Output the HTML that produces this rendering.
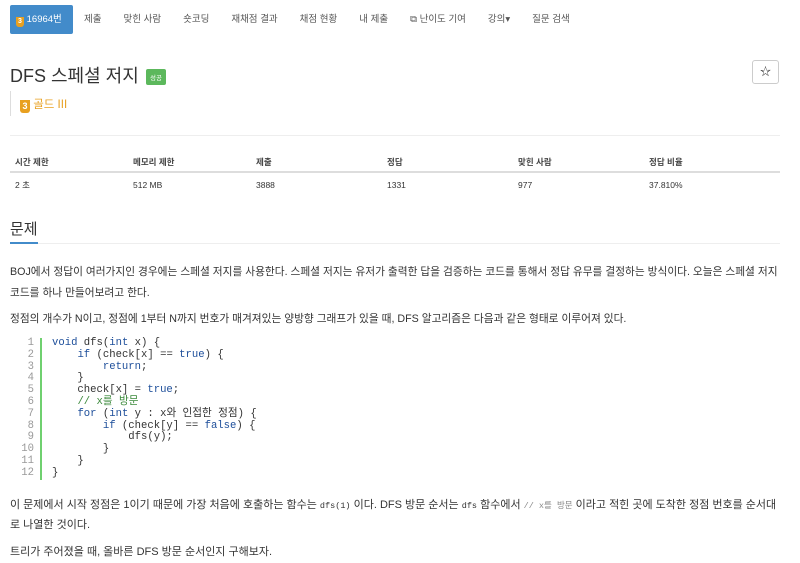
<!DOCTYPE html>
<html><head><meta charset="utf-8"><style>
*{margin:0;padding:0;box-sizing:border-box}
body{width:800px;height:563px;background:#fff;font-family:"Liberation Sans","Noto Sans CJK KR",sans-serif;color:#333;position:relative;overflow:hidden;font-size:11px}
.a{position:absolute;white-space:nowrap}
.nav{position:absolute;top:5px;left:10px;height:29px;display:flex;white-space:nowrap}
.nav div{font-size:9.5px;color:#555;line-height:29px;padding:0 11px}
.nav .act{background:#428bca;color:#fff;border-radius:2px;padding:0 6px;width:63px}
.sh{display:inline-block;width:8px;height:10px;background:#e8a020;color:#fff;font-size:7px;line-height:10px;text-align:center;font-weight:bold;vertical-align:-1px;border-radius:0 0 3px 3px}
th,td{font-size:8.5px;text-align:left;font-weight:normal}
th{font-weight:bold;color:#444}
.code{position:absolute;left:18px;top:338px;font-family:"Liberation Mono","Noto Sans CJK KR",monospace;font-size:10.6px;line-height:11.8px}
.ln{position:absolute;left:0;width:16px;text-align:right;color:#999}
.kw{color:#1d4e9a}.cm{color:#3c8a3c}
.p{font-size:10.7px;color:#333;left:10px}
code{font-family:"Liberation Mono",monospace;font-size:8.5px;color:#333}
</style></head><body>
<div class="nav">
<div class="act"><span class="sh">3</span> 16964번</div>
<div>제출</div><div>맞힌 사람</div><div>숏코딩</div><div>재채점 결과</div><div>채점 현황</div><div>내 제출</div><div>⧉ 난이도 기여</div><div>강의▾</div><div>질문 검색</div>
</div>
<div class="a" style="left:10px;top:62px;font-size:18px;color:#333">DFS 스페셜 저지</div>
<div class="a" style="left:146px;top:69px;background:#5cb85c;color:#fff;font-size:6.5px;padding:3px 4px;border-radius:2px">성공</div>
<div class="a" style="left:752px;top:60px;width:27px;height:24px;border:1px solid #ccc;border-radius:3px;text-align:center;line-height:22px;font-size:11px">☆</div>
<div class="a" style="left:10px;top:91px;width:1px;height:25px;background:#ddd"></div>
<div class="a" style="left:20px;top:96px;font-size:11.5px;color:#e8a020"><span class="sh" style="width:10px;height:13px;line-height:13px;font-size:9px">3</span> 골드 III</div>
<div class="a" style="left:10px;top:135px;width:770px;height:1px;background:#eee"></div>
<table class="a" style="left:10px;top:152px;width:770px;border-collapse:collapse">
<tr style="border-bottom:2px solid #ddd;height:20px"><th style="padding-left:5px;width:123px">시간 제한</th><th style="width:123px">메모리 제한</th><th style="width:131px">제출</th><th style="width:131px">정답</th><th style="width:131px">맞힌 사람</th><th>정답 비율</th></tr>
<tr style="height:25px"><td style="padding-left:5px">2 초</td><td>512 MB</td><td>3888</td><td>1331</td><td>977</td><td>37.810%</td></tr>
</table>
<div class="a" style="left:10px;top:218px;font-size:15px">문제</div>
<div class="a" style="left:10px;top:243px;width:770px;height:1px;background:#eee"></div>
<div class="a" style="left:10px;top:242px;width:28px;height:2px;background:#428bca"></div>
<div class="a p" style="top:264px">BOJ에서 정답이 여러가지인 경우에는 스페셜 저지를 사용한다. 스페셜 저지는 유저가 출력한 답을 검증하는 코드를 통해서 정답 유무를 결정하는 방식이다. 오늘은 스페셜 저지</div>
<div class="a p" style="top:285px">코드를 하나 만들어보려고 한다.</div>
<div class="a p" style="top:311px">정점의 개수가 N이고, 정점에 1부터 N까지 번호가 매겨져있는 양방향 그래프가 있을 때, DFS 알고리즘은 다음과 같은 형태로 이루어져 있다.</div>
<div class="a" style="left:40px;top:338px;width:2px;height:142px;background:#6fd06f"></div>
<div class="code">
<div class="ln" style="top:0">1<br>2<br>3<br>4<br>5<br>6<br>7<br>8<br>9<br>10<br>11<br>12</div>
<pre style="position:absolute;left:34px;top:0;font:inherit;color:#333"><span class="kw">void</span> dfs(<span class="kw">int</span> x) {
    <span class="kw">if</span> (check[x] == <span class="kw">true</span>) {
        <span class="kw">return</span>;
    }
    check[x] = <span class="kw">true</span>;
    <span class="cm">// x를 방문</span>
    <span class="kw">for</span> (<span class="kw">int</span> y : x와 인접한 정점) {
        <span class="kw">if</span> (check[y] == <span class="kw">false</span>) {
            dfs(y);
        }
    }
}</pre>
</div>
<div class="a p" style="top:496px;font-size:11px">이 문제에서 시작 정점은 1이기 때문에 가장 처음에 호출하는 함수는 <code>dfs(1)</code> 이다. DFS 방문 순서는 <code>dfs</code> 함수에서 <code style="color:#888">// x를 방문</code> 이라고 적힌 곳에 도착한 정점 번호를 순서대</div>
<div class="a p" style="top:516px;font-size:11px">로 나열한 것이다.</div>
<div class="a p" style="top:543px;font-size:11px">트리가 주어졌을 때, 올바른 DFS 방문 순서인지 구해보자.</div>
</body></html>
